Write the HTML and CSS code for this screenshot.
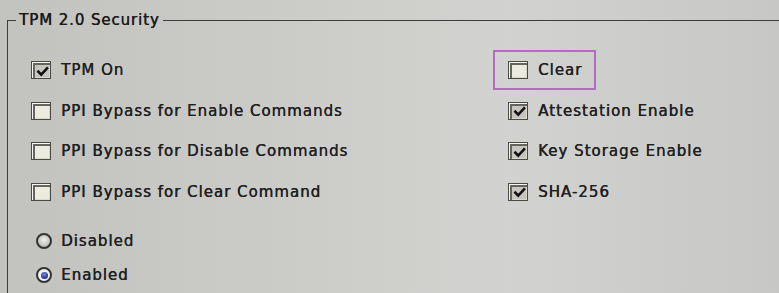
FILE: index.html
```html
<!DOCTYPE html>
<html lang="en">
<head>
<meta charset="utf-8">
<title>TPM 2.0 Security</title>
<link rel="stylesheet" href="styles.css">
</head>
<body>
<fieldset class="group">
  <legend class="group-title">TPM 2.0 Security</legend>
  <div class="options">
    <div class="col">
      <label class="item"><span class="box checked"><svg viewBox="0 0 14 12"><path d="M2.5 6.2 L5.6 9.4 L12 2.6"/></svg></span><span class="text">TPM On</span></label>
      <label class="item"><span class="box"></span><span class="text">PPI Bypass for Enable Commands</span></label>
      <label class="item"><span class="box"></span><span class="text">PPI Bypass for Disable Commands</span></label>
      <label class="item"><span class="box"></span><span class="text">PPI Bypass for Clear Command</span></label>
    </div>
    <div class="col">
      <label class="item focused"><span class="box"></span><span class="text">Clear</span></label>
      <label class="item"><span class="box checked"><svg viewBox="0 0 14 12"><path d="M2.5 6.2 L5.6 9.4 L12 2.6"/></svg></span><span class="text">Attestation Enable</span></label>
      <label class="item"><span class="box checked"><svg viewBox="0 0 14 12"><path d="M2.5 6.2 L5.6 9.4 L12 2.6"/></svg></span><span class="text">Key Storage Enable</span></label>
      <label class="item"><span class="box checked"><svg viewBox="0 0 14 12"><path d="M2.5 6.2 L5.6 9.4 L12 2.6"/></svg></span><span class="text">SHA-256</span></label>
    </div>
  </div>
  <div class="radios">
    <label class="item radio-item"><span class="radio"></span><span class="text">Disabled</span></label>
    <label class="item radio-item"><span class="radio selected"></span><span class="text">Enabled</span></label>
  </div>
</fieldset>
</body>
</html>
```
FILE: styles.css
```css
html {
  background: linear-gradient(90deg, #c2c2bf 0%, #cbcbc8 35%, #d2d2d0 65%, #c7c7c5 100%);
  height: 100%;
}
body {
  margin: 0;
  height: 100%;
  overflow: hidden;
  font-family: "DejaVu Sans", Verdana, sans-serif;
  color: #202020;
}
.group {
  margin: 11px 0 0 7px;
  padding: 21px 0 0 8px;
  border: 1px solid #3c3c3a;
  border-right: none;
  border-bottom: none;
  min-height: 320px;
  box-sizing: border-box;
}
.group-title {
  padding: 0 3px 0 3px;
  font-size: 15px;
  line-height: 18px;
  letter-spacing: 0.9px;
  color: #1a1a1a;
  text-shadow: 0.4px 0 0 #1a1a1a;
}
.options {
  display: grid;
  grid-template-columns: 477px 1fr;
}
.col {
  display: flex;
  flex-direction: column;
}
.item {
  display: flex;
  align-items: center;
  width: fit-content;
  height: 40.5px;
  box-sizing: border-box;
  padding: 0 12px 0 13px;
  border: 2px solid transparent;
  gap: 10px;
}
.item.focused {
  height: 39.5px;
  margin-bottom: 1px;
  border-color: #b56bc3;
}
.text {
  font-size: 15px;
  letter-spacing: 1px;
  white-space: nowrap;
  text-shadow: 0.4px 0 0 #202020;
}
.box {
  flex: none;
  width: 20px;
  height: 18px;
  box-sizing: border-box;
  border: 1px solid #4a4a44;
  background: #ecebdf;
  box-shadow: inset 1px 1px 0 #f6f6f2, inset 3px 3px 0 #66655d, inset -1px -1px 0 #d9d8cc;
  display: flex;
  align-items: center;
  justify-content: center;
}
.box.checked {
  background: #c6c6bf;
}
.box svg {
  width: 13px;
  height: 11px;
  margin: 2px 0 0 2px;
}
.box svg path {
  fill: none;
  stroke: #121212;
  stroke-width: 2.8;
  stroke-linecap: square;
}
.radios {
  margin-top: 12px;
  display: flex;
  flex-direction: column;
}
.radio-item {
  height: 34px;
  padding-left: 18px;
  gap: 9px;
}
.radio {
  flex: none;
  width: 16px;
  height: 16px;
  box-sizing: border-box;
  border-radius: 50%;
  border: 2px solid #34342f;
  background: radial-gradient(circle at 50% 40%, #f0f0ee 0%, #c9c9c6 55%, #9d9d9a 100%);
  display: flex;
  align-items: center;
  justify-content: center;
}
.radio.selected {
  background: #f2f2f0;
}
.radio.selected::after {
  content: "";
  width: 7px;
  height: 7px;
  border-radius: 50%;
  background: radial-gradient(circle at 45% 35%, #7a8ce0 0%, #2a3aa0 60%, #1a226a 100%);
}
```
